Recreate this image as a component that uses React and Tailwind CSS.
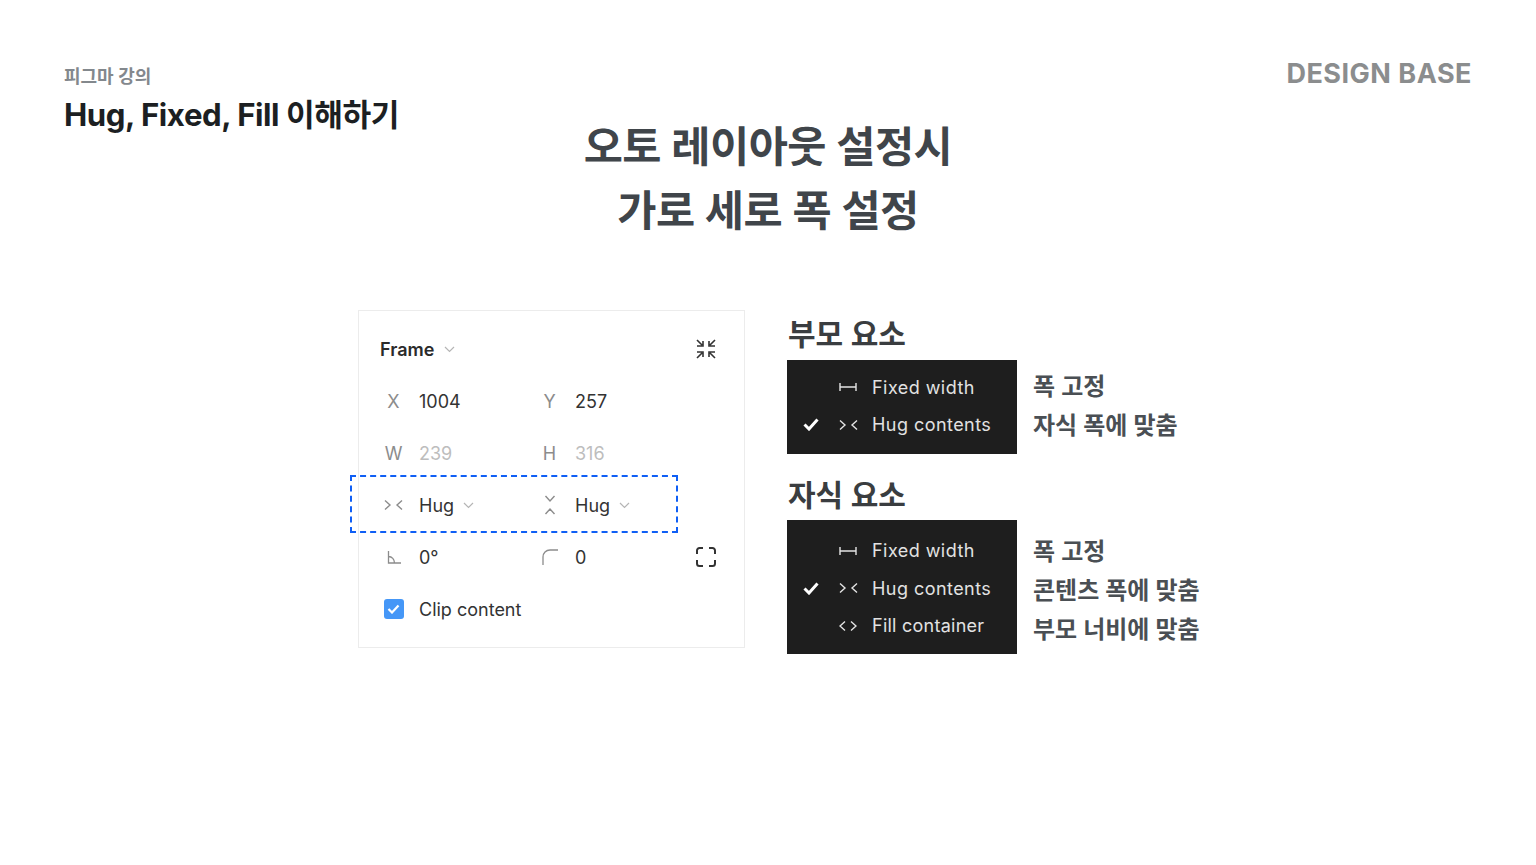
import React from 'react';

const font = "font-['Inter','Noto_Sans_CJK_KR',sans-serif]";

const Chevron = ({ className = '' }) => (
  <svg width="11" height="7" viewBox="0 0 11 7" fill="none" className={className}>
    <path d="M1 1l4.5 4.5L10 1" stroke="#b5b5b5" strokeWidth="1.2" />
  </svg>
);

const HugH = ({ color = '#8c8c8c' }) => (
  <svg width="19" height="12" viewBox="0 0 19 12" fill="none">
    <path d="M1 1.5L6 6 1 10.5M18 1.5L13 6l5 4.5" stroke={color} strokeWidth="1.4" />
  </svg>
);

const HugV = () => (
  <svg width="12" height="20" viewBox="0 0 12 20" fill="none">
    <path d="M1.5 1L6 6l4.5-5M1.5 19L6 14l4.5 5" stroke="#8c8c8c" strokeWidth="1.4" />
  </svg>
);

const FixedIcon = () => (
  <svg width="18" height="10" viewBox="0 0 18 10" fill="none">
    <path d="M1 1v8M17 1v8M1 5h16" stroke="#e4e4e4" strokeWidth="1.4" />
  </svg>
);

const FillIcon = () => (
  <svg width="18" height="12" viewBox="0 0 18 12" fill="none">
    <path d="M6 1.5L1 6l5 4.5M12 1.5L17 6l-5 4.5" stroke="#e4e4e4" strokeWidth="1.4" />
  </svg>
);

const Check = () => (
  <svg width="16" height="13" viewBox="0 0 16 13" fill="none">
    <path d="M1.5 6.5L6 11l8.5-9.5" stroke="#fff" strokeWidth="3" />
  </svg>
);

const Collapse = () => (
  <svg width="22" height="22" viewBox="0 0 22 22" fill="none" stroke="#333" strokeWidth="1.6" className="ml-[1px]">
    <path d="M2 2l5 5M2 8h6V3" />
    <path d="M20 2l-5 5M20 8h-6V3" />
    <path d="M2 20l5-5M2 14h6v5" />
    <path d="M20 20l-5-5M20 14h-6v5" />
  </svg>
);

const Angle = () => (
  <svg width="14" height="13" viewBox="0 0 14 13" fill="none" stroke="#8c8c8c" strokeWidth="1.3">
    <path d="M1.5 0v12H14M1.5 5.5c3.5 0 6 3 6 6.5" />
  </svg>
);

const Radius = () => (
  <svg width="16" height="16" viewBox="0 0 16 16" fill="none" stroke="#8c8c8c" strokeWidth="1.3">
    <path d="M1 16V8c0-4 3-7 7-7h8" />
  </svg>
);

const Corners = () => (
  <svg width="20" height="20" viewBox="0 0 20 20" fill="none" stroke="#333" strokeWidth="2" className="ml-[1px]">
    <path d="M1 7V3.5A2.5 2.5 0 013.5 1H7M13 1h3.5A2.5 2.5 0 0119 3.5V7M19 13v3.5a2.5 2.5 0 01-2.5 2.5H13M7 19H3.5A2.5 2.5 0 011 16.5V13" />
  </svg>
);

const Cell = ({ icon, children, muted }) => (
  <div className="flex items-center">
    <div className="w-[27px] flex justify-center text-[18px] text-[#8c8c8c]">{icon}</div>
    <div className={`ml-3 flex items-center gap-[9px] text-[18px] ${muted ? 'text-[#bdbdbd]' : 'text-[#333]'}`}>
      {children}
    </div>
  </div>
);

const Row = ({ left, right, end }) => (
  <div className="h-[52px] grid grid-cols-[156px_156px_26px] items-center">
    {left}
    {right}
    <div className="flex justify-center">{end}</div>
  </div>
);

const FramePanel = () => (
  <div className="relative w-[387px] h-[338px] border border-[#ececec] pl-[21px] pt-[12px]">
    <div className="h-[52px] grid grid-cols-[312px_26px] items-center">
      <div className="flex items-center gap-[10px] text-[18px] font-semibold text-[#2b2b2b]">
        Frame <Chevron />
      </div>
      <div className="flex justify-center"><Collapse /></div>
    </div>
    <Row left={<Cell icon="X">1004</Cell>} right={<Cell icon="Y">257</Cell>} />
    <Row left={<Cell icon="W" muted>239</Cell>} right={<Cell icon="H" muted>316</Cell>} />
    <Row
      left={<Cell icon={<HugH />}>Hug <Chevron /></Cell>}
      right={<Cell icon={<HugV />}>Hug <Chevron /></Cell>}
    />
    <Row
      left={<Cell icon={<Angle />}>0°</Cell>}
      right={<Cell icon={<Radius />}>0</Cell>}
      end={<Corners />}
    />
    <div className="h-[52px] flex items-center">
      <div className="w-[27px] flex justify-center">
        <div className="w-5 h-5 rounded-[3px] bg-[#4597f7] flex items-center justify-center">
          <svg width="13" height="10" viewBox="0 0 13 10" fill="none">
            <path d="M1.5 5L5 8.5l6.500-7" stroke="#fff" strokeWidth="2.2" />
          </svg>
        </div>
      </div>
      <span className="ml-3 text-[18px] text-[#333]">Clip content</span>
    </div>
    {/* selection marker over the Hug row */}
    <div className="absolute left-[-9px] top-[164px] w-[328px] h-[58px] border-2 border-dashed border-[#0f5ff5]" />
  </div>
);

const MenuItem = ({ checked, icon, label, tight }) => (
  <div className="h-[37.5px] flex items-center">
    <div className="w-[48px] flex justify-center">{checked && <Check />}</div>
    <div className="w-[26px] flex justify-center">{icon}</div>
    <span className={`ml-[11px] text-[18px] text-[#e2e2e2] ${tight ? 'tracking-[0.25px]' : 'tracking-[0.45px]'}`}>{label}</span>
  </div>
);

const Section = ({ title, items, notes, noteClass, menuClass, titleClass }) => (
  <div>
    <h3 className={`text-[30px] leading-[36px] font-semibold text-[#3a3d40] pl-[1px] ${titleClass}`}>{title}</h3>
    <div className="flex items-center">
      <div className={`w-[230px] bg-[#1e1e1e] flex flex-col justify-center ${menuClass}`}>
        {items.map((item) => <MenuItem key={item.label} {...item} />)}
      </div>
      <div className={`ml-4 flex flex-col text-[24px] font-semibold text-[#4a4f54] ${noteClass}`}>
        {notes.map((n) => <div key={n} className="h-[39px] flex items-center">{n}</div>)}
      </div>
    </div>
  </div>
);

export default function App() {
  return (
    <div className={`w-[1536px] h-[865px] bg-white overflow-hidden ${font}`}>
      <header className="h-[115px] flex justify-between px-[64px] pt-[62px]">
        <div>
          <p className="pt-[2px] text-[18px] leading-[26px] font-semibold text-[#83888d]">피그마 강의</p>
          <h2 className="mt-[1px] text-[31.2px] leading-[48px] font-bold tracking-[-0.45px] text-[#1c1f22]">Hug, Fixed, Fill 이해하기</h2>
        </div>
        <div className="text-[27px] leading-[24px] font-bold tracking-[0.5px] text-[#8b8d8e]">DESIGN BASE</div>
      </header>

      <h1 className="text-center text-[42.6px] leading-[64px] font-semibold tracking-[-0.5px] text-[#40454a]">
        오토 레이아웃 설정시<br />가로 세로 폭 설정
      </h1>

      <main className="mt-[67px] pl-[358px] flex items-start">
        <FramePanel />
        <div className="ml-[42px] mt-[6px] flex flex-col gap-[23px]">
          <Section
            title="부모 요소"
            menuClass="h-[94px] pb-[2px]"
            noteClass="pb-[2px]"
            titleClass="mb-[8px]"
            items={[
              { icon: <FixedIcon />, label: 'Fixed width' },
              { checked: true, icon: <HugH color="#e4e4e4" />, label: 'Hug contents' },
            ]}
            notes={['폭 고정', '자식 폭에 맞춤']}
          />
          <Section
            title="자식 요소"
            menuClass="h-[134px] pt-[2px]"
            noteClass="pt-[8px]"
            titleClass="mb-[7px]"
            items={[
              { icon: <FixedIcon />, label: 'Fixed width' },
              { checked: true, icon: <HugH color="#e4e4e4" />, label: 'Hug contents' },
              { icon: <FillIcon />, label: 'Fill container', tight: true },
            ]}
            notes={['폭 고정', '콘텐츠 폭에 맞춤', '부모 너비에 맞춤']}
          />
        </div>
      </main>
    </div>
  );
}
